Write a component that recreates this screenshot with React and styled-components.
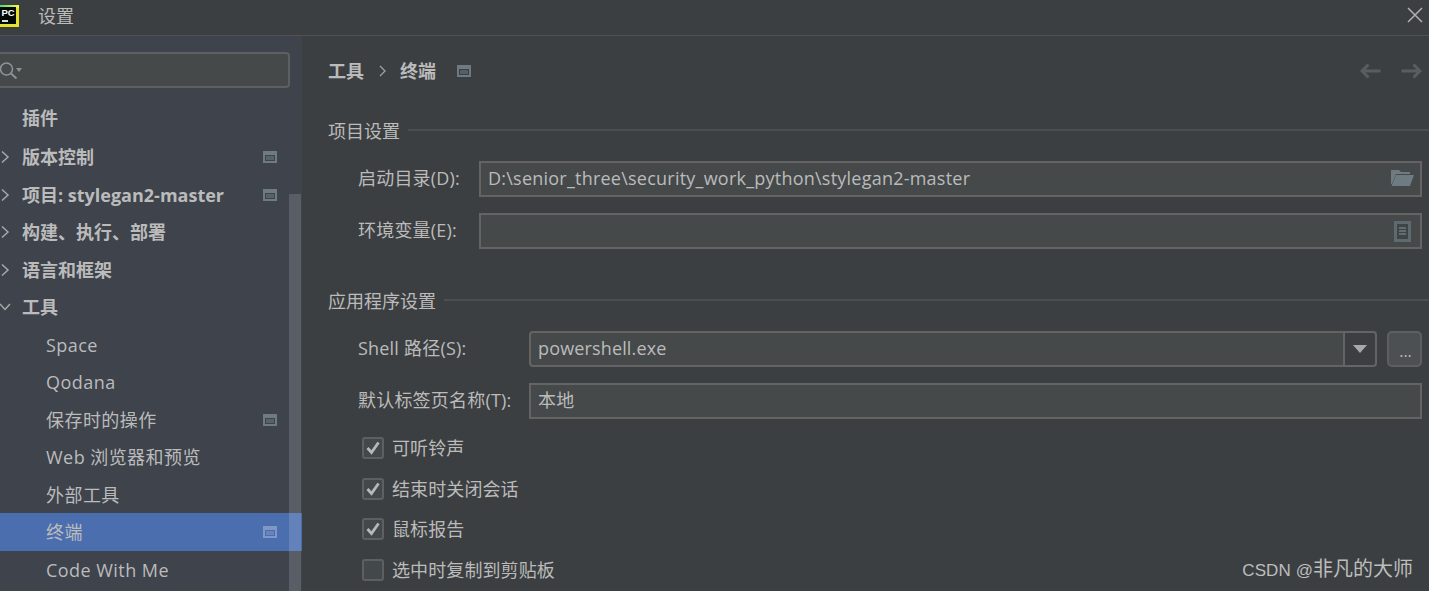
import React from "react";
import styled, { createGlobalStyle } from "styled-components";

const FONT = `"Open Sans", "Noto Sans CJK SC", sans-serif`;

const Global = createGlobalStyle`
  html, body { margin: 0; padding: 0; background: #3c3f41; overflow: hidden; }
  * { box-sizing: border-box; }
`;

const Window = styled.div`
  position: relative;
  width: 1429px;
  height: 591px;
  overflow: hidden;
  display: flex;
  flex-direction: column;
  background: #3c3f41;
  color: #bbbbbb;
  font: 18px/24px ${FONT};
`;

const TitleBar = styled.header`
  flex: 0 0 36px;
  display: flex;
  align-items: center;
  padding: 0 6px 6px 0;
  border-bottom: 1px solid #515151;
  gap: 18px;
`;

const TitleText = styled.span`
  flex: 1;
  font-size: 18px;
  margin-top: 2px;
`;

const Body = styled.div`
  flex: 1;
  display: flex;
  min-height: 0;
`;

const Sidebar = styled.aside`
  position: relative;
  flex: 0 0 302px;
  background: #3e434c;
  padding-top: 16px;
  overflow: hidden;
`;

const SearchBox = styled.div`
  width: 310px;
  height: 36px;
  margin-left: -20px;
  padding-left: 18px;
  display: flex;
  align-items: center;
  background: #45494a;
  border: 2px solid #5d5f61;
  border-radius: 4px;
`;

const Tree = styled.ul`
  list-style: none;
  margin: 10px 0 0;
  padding: 0;
`;

const Row = styled.li`
  height: 37.5px;
  display: flex;
  align-items: center;
  padding-left: ${p => (p.$child ? 46 : 22)}px;
  padding-right: 25px;
  font-weight: ${p => (p.$child ? 400 : 700)};
  letter-spacing: ${p => (p.$child ? 0.45 : 0)}px;
  background: ${p => (p.$selected ? "#4b6eaf" : "transparent")};
  position: relative;
  &:first-child {
    height: 40.25px;
  }
`;

const RowLabel = styled.span`
  flex: 1;
  white-space: nowrap;
`;

const Arrow = styled.svg`
  position: absolute;
  left: 0;
  top: 50%;
  margin-top: -8px;
`;

const ScrollTrack = styled.div`
  position: absolute;
  top: 158px;
  right: 1px;
  width: 12px;
  bottom: 0;
  background: rgba(255, 255, 255, 0.14);
`;

const Main = styled.main`
  flex: 1;
  min-width: 0;
  padding: 20px 7px 0 26px;
`;

const Crumbs = styled.div`
  height: 30px;
  display: flex;
  align-items: center;
  font-weight: 700;
`;

const CrumbSep = styled.span`
  margin: 0 12px 0 14px;
  display: flex;
`;

const CrumbIcon = styled.span`
  margin-left: 21px;
  display: flex;
`;

const Nav = styled.div`
  margin-left: auto;
  display: flex;
  gap: 20px;
`;

const Section = styled.div`
  display: flex;
  align-items: center;
  height: 24px;
  margin-right: -7px;
  margin-top: ${p => p.$top}px;
  gap: 8px;
  &::after {
    content: "";
    flex: 1;
    height: 2px;
    background: #4c4e50;
    margin-top: -2px;
  }
`;

const FieldRow = styled.div`
  display: flex;
  align-items: center;
  height: 36px;
  margin-top: ${p => p.$top}px;
  padding-left: 30px;
`;

const FieldLabel = styled.label`
  flex: 0 0 ${p => p.$w}px;
  white-space: nowrap;
  letter-spacing: 0.2px;
  padding-bottom: 2px;
`;

const Input = styled.div`
  flex: 1;
  min-width: 0;
  height: 36px;
  display: flex;
  align-items: center;
  justify-content: space-between;
  padding: 0 6px 2px 7px;
  background: #45494a;
  border: 2px solid #646464;
  letter-spacing: 0.23px;
`;

const Combo = styled.div`
  flex: 1;
  height: 36px;
  display: flex;
  background: #45494a;
  border: 2px solid #646464;
  border-radius: 4px;
`;

const ComboValue = styled.div`
  flex: 1;
  padding: 0 0 2px 7px;
  display: flex;
  align-items: center;
  border-right: 2px solid #646464;
  letter-spacing: 0.15px;
`;

const ComboArrow = styled.div`
  flex: 0 0 30px;
  display: flex;
  align-items: center;
  justify-content: center;
  background: #3c3f41;
  border-radius: 0 3px 3px 0;
`;

const DotsButton = styled.button`
  flex: 0 0 35px;
  height: 36px;
  margin-left: 10px;
  padding: 0 0 0 2px;
  background: #4c5052;
  border: 2px solid #5e6060;
  border-radius: 5px;
  color: #bbbbbb;
  font: 16px/36px ${FONT};
`;

const CheckList = styled.div`
  margin: 9px 0 0 34px;
`;

const CheckRow = styled.div`
  height: 40.5px;
  display: flex;
  align-items: center;
  gap: 8px;
  letter-spacing: 0.1px;
`;

const Box = styled.span`
  flex: 0 0 22px;
  height: 22px;
  display: flex;
  align-items: center;
  justify-content: center;
  background: #43494a;
  border: 2px solid #5e6060;
  border-radius: 3px;
`;

const Watermark = styled.div`
  position: absolute;
  right: 16px;
  bottom: 8px;
  color: #bdbdbd;
  font: 20px/24px "Liberation Sans", "Noto Sans CJK SC", sans-serif;
  white-space: nowrap;
`;

const WatermarkLatin = styled.span`
  font-size: 17px;
  letter-spacing: 0.1px;
`;

const DocSvg = styled.svg`
  margin: 2px 3px 0 0;
`;

const Logo = () => (
  <svg width="20" height="26" viewBox="0 0 20 26">
    <defs>
      <linearGradient id="lg" x1="0" y1="0" x2="1" y2="0">
        <stop offset="0" stopColor="#21d789" />
        <stop offset="1" stopColor="#fcf84a" />
      </linearGradient>
    </defs>
    <rect x="-4" y="3" width="23" height="22" fill="#e6e32f" />
    <rect x="-4" y="3" width="23" height="3" fill="url(#lg)" />
    <rect x="-1" y="5" width="17" height="17" fill="#020a05" />
    <text x="1.5" y="14" fontSize="9.5" fontWeight="700" fill="#fff" fontFamily="Liberation Sans, sans-serif">PC</text>
    <rect x="2" y="18" width="6" height="2" fill="#dcdcdc" />
  </svg>
);

const SearchIcon = () => (
  <svg width="24" height="20" viewBox="0 0 24 20" fill="none">
    <circle cx="6.5" cy="9" r="6" stroke="#8e9498" strokeWidth="1.5" />
    <path d="M11 13.5 L16.5 18.5" stroke="#8e9498" strokeWidth="1.8" />
    <path d="M16 8 h6 l-3 4 z" fill="#8c9196" />
  </svg>
);

const Chevron = ({ down }) => (
  <Arrow width="12" height="16" viewBox="0 0 12 16" fill="none">
    <path d={down ? "M0 5 L5 10.5 L10 5" : "M2 2.5 L8 8 L2 13.5"} stroke="#a8a8a8" strokeWidth="1.5" />
  </Arrow>
);

const ProjectIcon = ({ color = "#6e7b85", fill = "#3e434c" }) => (
  <svg width="14" height="12" viewBox="0 0 14 12">
    <rect width="14" height="12" fill={color} />
    <rect x="2" y="4" width="10" height="6" fill={fill} />
    <rect x="3" y="5" width="8" height="4" fill={color} opacity="0.55" />
  </svg>
);

const Close = () => (
  <svg width="16" height="16" viewBox="0 0 16 16" fill="none">
    <path d="M1 1 L15 15 M15 1 L1 15" stroke="#b0b0b0" strokeWidth="1.5" />
  </svg>
);

const NavArrow = ({ flip }) => (
  <svg width="21" height="16" viewBox="0 0 21 16" fill="none" style={flip ? { transform: "scaleX(-1)" } : undefined}>
    <path d="M20.5 8 H2 M8.5 1.5 L2 8 L8.5 14.5" stroke="#5a5d5f" strokeWidth="3" />
  </svg>
);

const FolderIcon = () => (
  <svg width="23" height="18" viewBox="0 0 23 18">
    <path d="M0 1 H8 L10 3 H19 V5 H5 L1 15 H0 Z" fill="#6e7b80" />
    <path d="M5 6 H23 L19 17 H0.5 Z" fill="#6e7b80" />
  </svg>
);

const DocIcon = () => (
  <DocSvg width="17" height="21" viewBox="0 0 17 21">
    <rect width="17" height="21" fill="#5e6a70" />
    <rect x="3" y="3" width="11" height="15" fill="#3f4446" />
    <path d="M5 7 H12 M5 10 H12 M5 13 H12" stroke="#6e7b80" strokeWidth="1.6" />
  </DocSvg>
);

const Check = () => (
  <svg width="14" height="14" viewBox="0 0 14 14" fill="none">
    <path d="M1.5 7 L5.5 11.5 L12.5 1.5" stroke="#b8b8b8" strokeWidth="2.8" />
  </svg>
);

const items = [
  { label: "插件" },
  { label: "版本控制", arrow: "right", icon: true },
  { label: "项目: stylegan2-master", arrow: "right", icon: true },
  { label: "构建、执行、部署", arrow: "right" },
  { label: "语言和框架", arrow: "right" },
  { label: "工具", arrow: "down" },
  { label: "Space", child: true },
  { label: "Qodana", child: true },
  { label: "保存时的操作", child: true, icon: true },
  { label: "Web 浏览器和预览", child: true },
  { label: "外部工具", child: true },
  { label: "终端", child: true, icon: true, selected: true },
  { label: "Code With Me", child: true },
];

const checks = [
  { label: "可听铃声", on: true },
  { label: "结束时关闭会话", on: true },
  { label: "鼠标报告", on: true },
  { label: "选中时复制到剪贴板", on: false },
];

export default function App() {
  return (
    <Window>
      <Global />
      <TitleBar>
        <Logo />
        <TitleText>设置</TitleText>
        <Close />
      </TitleBar>
      <Body>
        <Sidebar>
          <SearchBox><SearchIcon /></SearchBox>
          <Tree>
            {items.map(it => (
              <Row key={it.label} $child={it.child} $selected={it.selected}>
                {it.arrow && <Chevron down={it.arrow === "down"} />}
                <RowLabel>{it.label}</RowLabel>
                {it.icon && (it.selected
                  ? <ProjectIcon color="#7f97c4" fill="#4b6eaf" />
                  : <ProjectIcon />)}
              </Row>
            ))}
          </Tree>
          <ScrollTrack />
        </Sidebar>
        <Main>
          <Crumbs>
            <span>工具</span>
            <CrumbSep>
              <svg width="10" height="14" viewBox="0 0 10 14" fill="none">
                <path d="M2 2 L7 7 L2 12" stroke="#a0a0a0" strokeWidth="1.3" />
              </svg>
            </CrumbSep>
            <span>终端</span>
            <CrumbIcon><ProjectIcon fill="#3c3f41" /></CrumbIcon>
            <Nav><NavArrow /><NavArrow flip /></Nav>
          </Crumbs>
          <Section $top={33}>项目设置</Section>
          <FieldRow $top={18}>
            <FieldLabel $w={121}>启动目录(D):</FieldLabel>
            <Input>
              <span>D:\senior_three\security_work_python\stylegan2-master</span>
              <FolderIcon />
            </Input>
          </FieldRow>
          <FieldRow $top={16}>
            <FieldLabel $w={121}>环境变量(E):</FieldLabel>
            <Input><span /><DocIcon /></Input>
          </FieldRow>
          <Section $top={40}>应用程序设置</Section>
          <FieldRow $top={18}>
            <FieldLabel $w={171}>Shell 路径(S):</FieldLabel>
            <Combo>
              <ComboValue>powershell.exe</ComboValue>
              <ComboArrow>
                <svg width="14" height="8" viewBox="0 0 14 8"><path d="M0 0 H14 L7 8 Z" fill="#a8a8a8" /></svg>
              </ComboArrow>
            </Combo>
            <DotsButton>...</DotsButton>
          </FieldRow>
          <FieldRow $top={16}>
            <FieldLabel $w={171}>默认标签页名称(T):</FieldLabel>
            <Input><span>本地</span></Input>
          </FieldRow>
          <CheckList>
            {checks.map(c => (
              <CheckRow key={c.label}>
                <Box>{c.on && <Check />}</Box>
                <span>{c.label}</span>
              </CheckRow>
            ))}
          </CheckList>
        </Main>
      </Body>
      <Watermark><WatermarkLatin>CSDN @</WatermarkLatin>非凡的大师</Watermark>
    </Window>
  );
}
